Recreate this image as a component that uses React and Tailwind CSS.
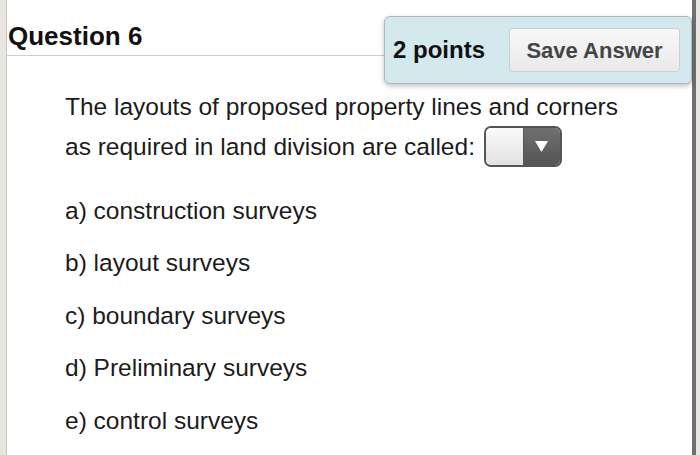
export default function App() {
  const options = [
    'a) construction surveys',
    'b) layout surveys',
    'c) boundary surveys',
    'd) Preliminary surveys',
    'e) control surveys',
  ];

  return (
    <div className="flex w-[700px] h-[455px] bg-white overflow-hidden" style={{ fontFamily: '"Liberation Sans", Arial, sans-serif' }}>
      {/* Left page edge */}
      <div className="w-[7px] shrink-0 bg-[#e8e6e1] border-r border-[#c9c7c2]" />

      {/* Question body */}
      <div className="relative flex-1 flex flex-col">
        <div className="h-[56px] shrink-0 border-b border-[#cfcfcf] flex items-end pb-[6px] pl-[1px]">
          <h2 className="text-[26px] leading-none font-bold text-[#111]">Question 6</h2>
        </div>

        {/* Points + save popup */}
        <div className="absolute left-[377px] top-[16px] w-[308px] h-[68px] flex items-center gap-[24px] pl-[8px] bg-[#d3e9ee] border border-[#a9b9bd] rounded-[6px] shadow-[0_2px_5px_rgba(0,0,0,0.25)]">
          <span className="text-[24px] font-bold text-[#111]">2 points</span>
          <button className="h-[44px] w-[171px] rounded-[3px] border border-[#cfcfcf] bg-gradient-to-b from-[#f8f8f8] to-[#e9e9e9] text-[22px] font-bold text-[#454545]">
            Save Answer
          </button>
        </div>

        <div className="pl-[58px] pt-[32px] text-[24.5px] leading-[38px] text-[#1c1c1c]">
          <p>The layouts of proposed property lines and corners</p>
          <p className="flex items-center">
            as required in land division are called:
            <span className="ml-[9px] inline-flex h-[41px] w-[78px] rounded-[7px] border-2 border-[#555] overflow-hidden">
              <span className="w-[38px] bg-gradient-to-b from-[#fafafa] to-[#e2e2e2] border-r border-[#555]" />
              <span className="flex-1 flex items-center justify-center bg-gradient-to-b from-[#707070] to-[#555]">
                <svg width="13" height="11" viewBox="0 0 13 11"><path d="M0 0 H13 L6.5 11 Z" fill="#fff" /></svg>
              </span>
            </span>
          </p>

          <ul className="mt-[25px] flex flex-col gap-[14.4px]">
            {options.map((o) => (
              <li key={o}>{o}</li>
            ))}
          </ul>
        </div>
      </div>

      {/* Right page edge */}
      <div className="w-[4px] shrink-0 bg-[#6f6f6f]" />
      <div className="w-[4px] shrink-0 bg-[#e9e7e2]" />
    </div>
  );
}
